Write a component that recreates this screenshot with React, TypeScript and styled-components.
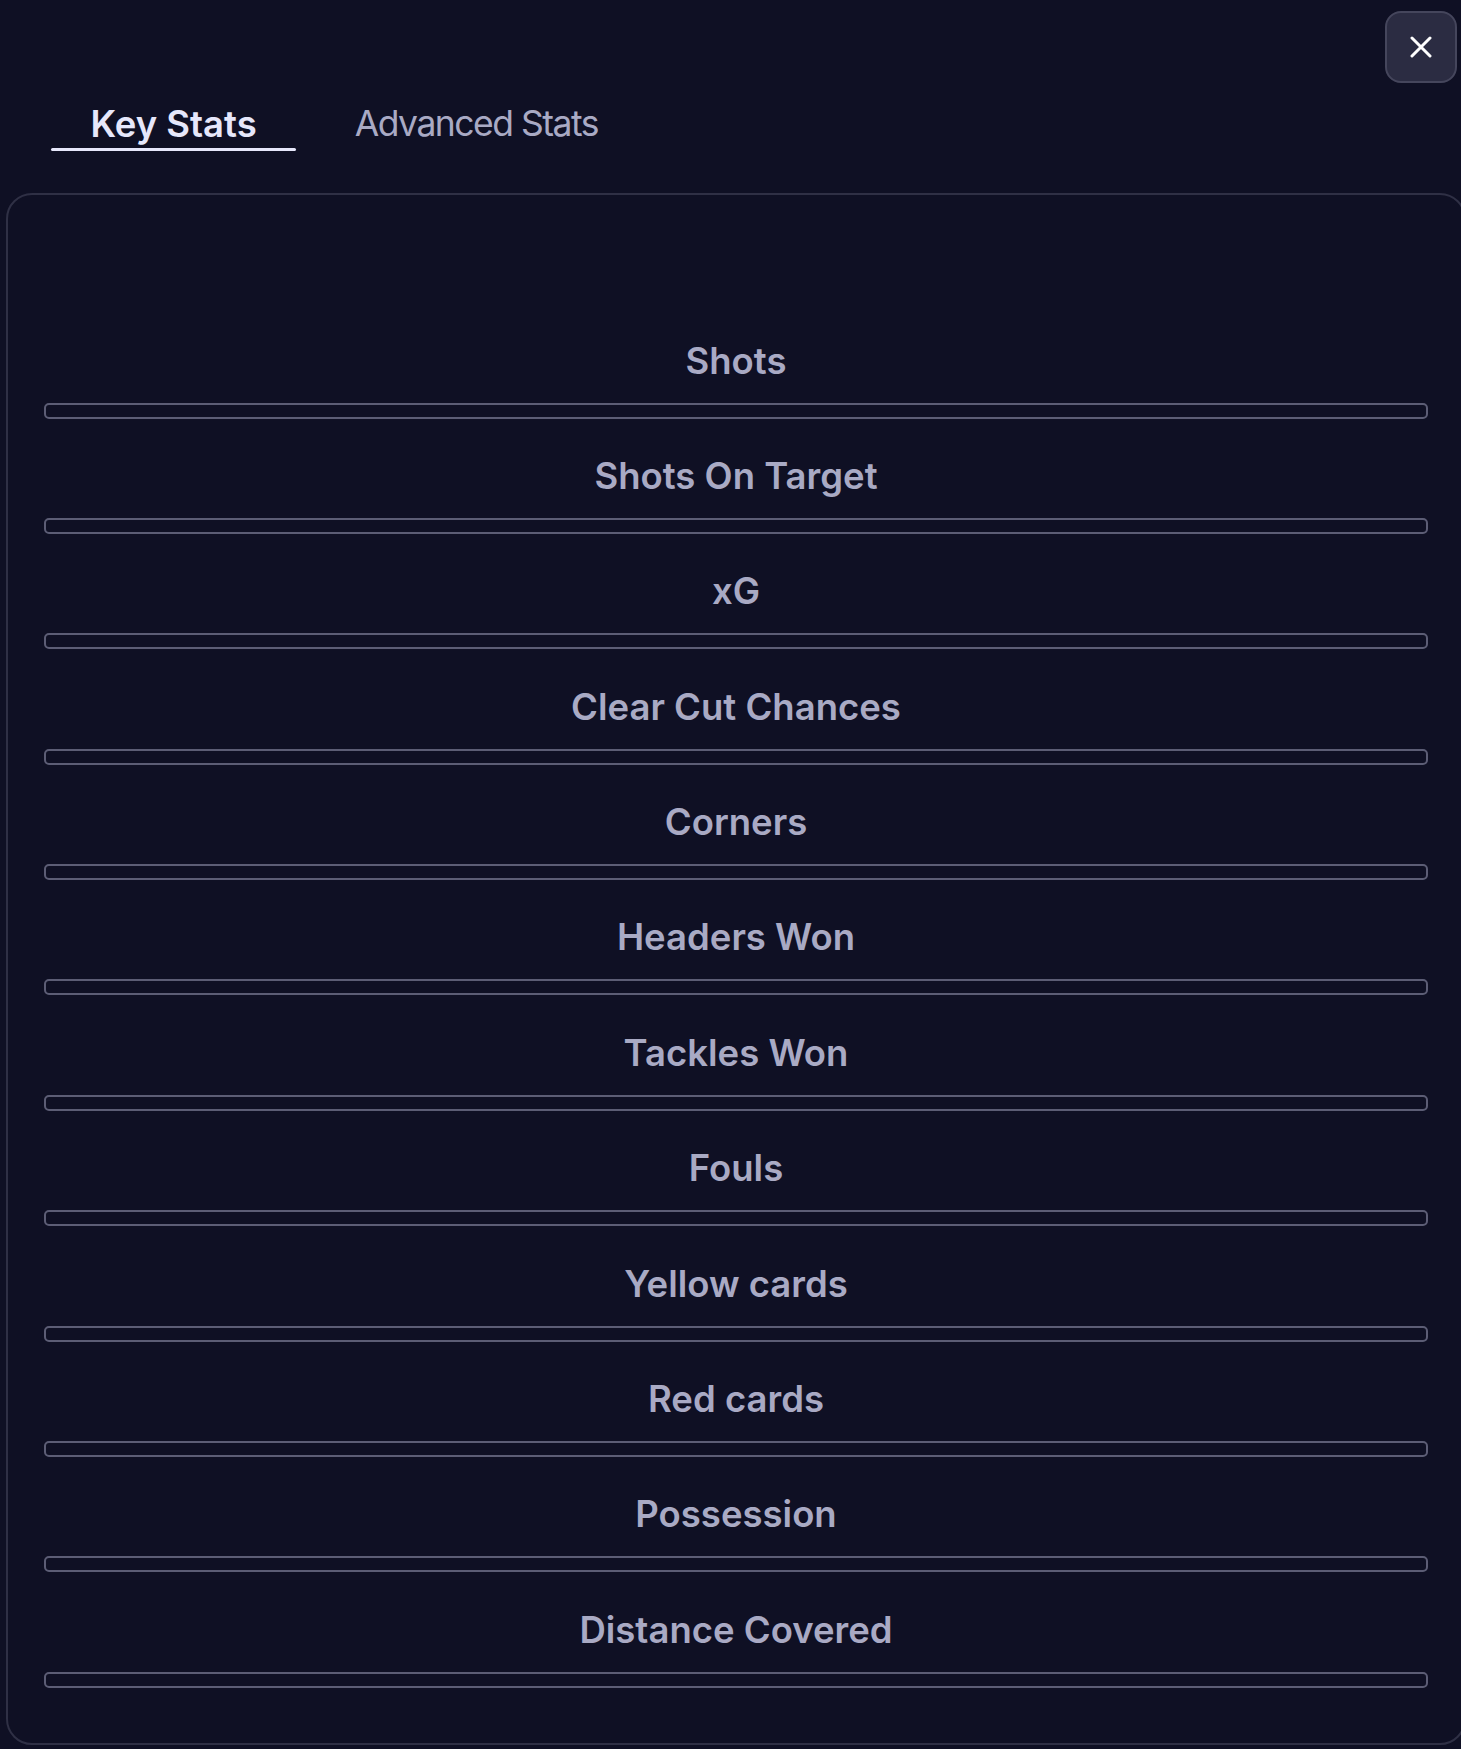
import React, { useState } from 'react'
import styled, { createGlobalStyle } from 'styled-components'

const GlobalStyle = createGlobalStyle`
  html, body {
    margin: 0;
    padding: 0;
    background: #0f1024;
    overflow: hidden;
  }
  body {
    font-family: Inter, "Noto Sans", "Liberation Sans", sans-serif;
    -webkit-font-smoothing: antialiased;
  }
`

const stats = [
  'Shots',
  'Shots On Target',
  'xG',
  'Clear Cut Chances',
  'Corners',
  'Headers Won',
  'Tackles Won',
  'Fouls',
  'Yellow cards',
  'Red cards',
  'Possession',
  'Distance Covered',
]

const Page = styled.div`
  position: relative;
  width: 1461px;
  min-height: 1749px;
  box-sizing: border-box;
  padding: 102px 0 0 6px;
  background: #0f1024;
`

const CloseButton = styled.button`
  position: absolute;
  top: 11px;
  right: 4px;
  width: 72px;
  height: 72px;
  display: flex;
  align-items: center;
  justify-content: center;
  padding: 0;
  background: #2b2c42;
  border: 2px solid #45465c;
  border-radius: 16px;
  cursor: pointer;
`

const TabList = styled.div`
  display: flex;
  gap: 19px;
  margin-left: 45px;
`

const Tab = styled.button<{ $active?: boolean }>`
  position: relative;
  padding: 0 39.5px 5px;
  background: none;
  border: none;
  font-family: inherit;
  font-size: ${(p) => (p.$active ? '36.5px' : '35.5px')};
  line-height: 44px;
  font-weight: ${(p) => (p.$active ? 600 : 400)};
  color: ${(p) => (p.$active ? '#e6e7fb' : '#a9aac4')};
  letter-spacing: ${(p) => (p.$active ? '0' : '-1.5px')};
  cursor: pointer;

  &::after {
    content: '';
    position: absolute;
    left: 0;
    right: 0;
    bottom: 0;
    height: 3px;
    border-radius: 2px;
    background: ${(p) => (p.$active ? '#e6e7fb' : 'transparent')};
  }
`

const Card = styled.div`
  width: 1460px;
  box-sizing: border-box;
  margin-top: 42px;
  padding: 143.5px 36px 55px;
  border: 2px solid #2f3045;
  border-radius: 26px;
  display: flex;
  flex-direction: column;
  gap: 35.4px;
`

const StatRow = styled.div`
  display: flex;
  flex-direction: column;
  gap: 20px;
`

const StatLabel = styled.div`
  text-align: center;
  font-size: 36.5px;
  line-height: 44px;
  font-weight: 600;
  color: #a9aac4;
`

const Bar = styled.div`
  height: 16px;
  box-sizing: border-box;
  border: 2px solid #5c5d75;
  border-radius: 5px;
`

export default function App() {
  const [tab, setTab] = useState('key')

  return (
    <>
      <GlobalStyle />
      <Page>
        <CloseButton aria-label="Close">
          <svg width="22" height="22" viewBox="0 0 22 22" fill="none">
            <path d="M2 2 20 20M20 2 2 20" stroke="#ffffff" strokeWidth="3" strokeLinecap="round" />
          </svg>
        </CloseButton>
        <TabList>
          <Tab $active={tab === 'key'} onClick={() => setTab('key')}>
            Key Stats
          </Tab>
          <Tab $active={tab === 'advanced'} onClick={() => setTab('advanced')}>
            Advanced Stats
          </Tab>
        </TabList>
        <Card>
          {stats.map((name) => (
            <StatRow key={name}>
              <StatLabel>{name}</StatLabel>
              <Bar />
            </StatRow>
          ))}
        </Card>
      </Page>
    </>
  )
}
